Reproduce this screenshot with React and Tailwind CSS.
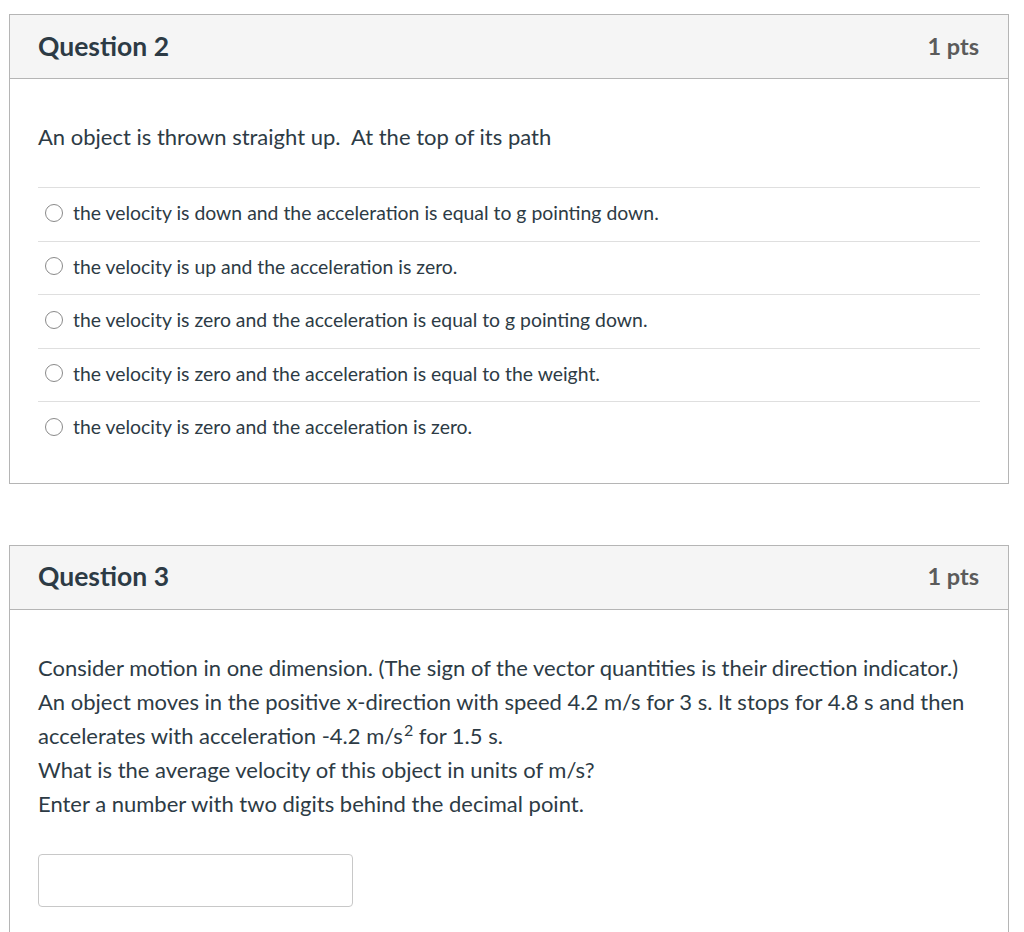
import React from "react";

const font = { fontFamily: "Lato, 'Open Sans', sans-serif" };

function Radio() {
  return (
    <span className="inline-block w-[18px] h-[18px] rounded-full border border-[#8a8a8a] bg-white shrink-0" />
  );
}

function Header({ title }) {
  return (
    <div className="h-[64px] bg-[#f5f5f5] border-b border-[#b5b5b5] flex items-center justify-between pl-[28px] pr-[29px]">
      <div className="text-[26.5px] font-bold text-[#2d3b45]">{title}</div>
      <div className="text-[23.5px] font-bold text-[#5b5b5b]">1 pts</div>
    </div>
  );
}

const options = [
  "the velocity is down and the acceleration is equal to g pointing down.",
  "the velocity is up and the acceleration is zero.",
  "the velocity is zero and the acceleration is equal to g pointing down.",
  "the velocity is zero and the acceleration is equal to the weight.",
  "the velocity is zero and the acceleration is zero.",
];

export default function App() {
  return (
    <div className="bg-white min-h-[932px] h-[932px] overflow-hidden pt-[14px] pl-[9px]" style={font}>
      <div className="w-[1000px] border border-[#b5b5b5] bg-white">
        <Header title="Question 2" />
        <div className="px-[28px] pt-[42px] pb-[28px]">
          <p className="text-[22px] leading-[32px] text-[#2d3b45]">
            An object is thrown straight up.&nbsp; At the top of its path
          </p>
          <div className="mt-[34px]">
            {options.map((o) => (
              <div key={o} className="border-t border-[#dfdfdf] h-[53.5px] flex items-center gap-[10px] pl-[7px] pb-[3px]">
                <Radio />
                <span className="text-[19.4px] text-[#2d3b45]">{o}</span>
              </div>
            ))}
          </div>
        </div>
      </div>

      <div className="w-[1000px] border border-[#b5b5b5] bg-white mt-[61px] h-[400px]">
        <Header title="Question 3" />
        <div className="px-[28px] pt-[41px]">
          <div className="text-[22px] leading-[34px] text-[#2d3b45]">
            <p>Consider motion in one dimension. (The sign of the vector quantities is their direction indicator.)</p>
            <p>
              An object moves in the positive x-direction with speed 4.2 m/s for 3 s. It stops for 4.8 s and then
              accelerates with acceleration -4.2 m/s<sup className="text-[16px] leading-none relative top-[-8px] ml-[1px]">2</sup> for 1.5 s.
            </p>
            <p>What is the average velocity of this object in units of m/s?</p>
            <p>Enter a number with two digits behind the decimal point.</p>
          </div>
          <div className="mt-[33px] w-[315px] h-[53px] border border-[#c8c8c8] rounded-[4px]" />
        </div>
      </div>
    </div>
  );
}
